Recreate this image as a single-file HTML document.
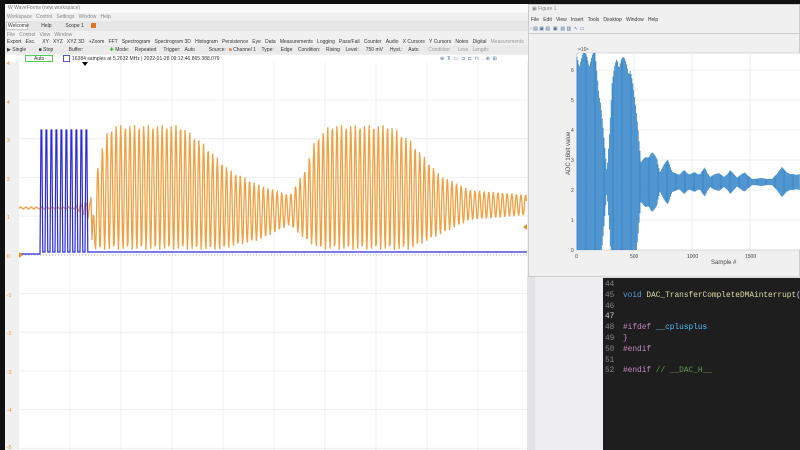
<!DOCTYPE html>
<html><head><meta charset="utf-8"><style>
*{margin:0;padding:0;box-sizing:border-box}
html,body{width:800px;height:450px;overflow:hidden}
body{background:#111;font-family:"Liberation Sans",sans-serif;position:relative}
.a{position:absolute}
.t{font-size:5px;color:#333;white-space:nowrap}
.code{font-family:"Liberation Mono",monospace;font-size:7.8px;white-space:pre;position:absolute}
</style></head><body>
<div class="a" style="left:5px;top:4px;width:523px;height:446px;background:#f0f0f0"></div>
<div class="a" style="left:5px;top:4px;width:523px;height:9px;background:#fafafa"></div>
<div class="a t" style="left:8px;top:5px;color:#777">W WaveForms (new workspace)</div>
<div class="a t" style="left:7px;top:14px;color:#888">Workspace &nbsp; Control &nbsp; Settings &nbsp; Window &nbsp; Help</div>
<div class="a" style="left:5px;top:21px;width:523px;height:10px;background:#e6e6e6"></div>
<div class="a" style="left:6px;top:22px;width:22px;height:8px;background:#fff;border:1px solid #ccc"></div>
<div class="a t" style="left:8px;top:23px">Welcome &nbsp;&nbsp;&nbsp;&nbsp;&nbsp;&nbsp;&nbsp;&nbsp;Help &nbsp;&nbsp;&nbsp;&nbsp;&nbsp;&nbsp;&nbsp;&nbsp;&nbsp;Scope 1</div>
<div class="a" style="left:91px;top:23px;width:5px;height:5px;background:#e8702a"></div>
<div class="a t" style="left:7px;top:32px;color:#888">File &nbsp; Control &nbsp; View &nbsp; Window</div>
<div class="a t" style="left:7px;top:39px">Export &nbsp; Exc. &nbsp;&nbsp;&nbsp;&nbsp;XY &nbsp;&nbsp;XYZ &nbsp;&nbsp;XYZ 3D &nbsp;&nbsp;+Zoom &nbsp;&nbsp;FFT &nbsp;&nbsp;Spectrogram &nbsp;&nbsp;Spectrogram 3D &nbsp;&nbsp;Histogram &nbsp;&nbsp;Persistence &nbsp;&nbsp;Eye &nbsp;&nbsp;Data &nbsp;&nbsp;Measurements &nbsp;&nbsp;Logging &nbsp;&nbsp;Pass/Fail &nbsp;&nbsp;Counter &nbsp;&nbsp;Audio &nbsp;&nbsp;X Cursors &nbsp;&nbsp;Y Cursors &nbsp;&nbsp;Notes &nbsp;&nbsp;Digital &nbsp;&nbsp;<span style="color:#999">Measurements</span></div>
<div class="a" style="left:5px;top:45px;width:523px;height:9px;background:#eaeaea"></div>
<div class="a t" style="left:7px;top:47px">▶ Single &nbsp;&nbsp;&nbsp;&nbsp;&nbsp;&nbsp;&nbsp;&nbsp;■ Stop &nbsp;&nbsp;&nbsp;&nbsp;&nbsp;&nbsp;&nbsp;&nbsp;&nbsp;&nbsp;Buffer: &nbsp;&nbsp;&nbsp;&nbsp;&nbsp;&nbsp;&nbsp;&nbsp;&nbsp;&nbsp;&nbsp;&nbsp;&nbsp;&nbsp;&nbsp;&nbsp;&nbsp;&nbsp;<span style="color:#2a2">✚</span> Mode: &nbsp;&nbsp;&nbsp;Repeated &nbsp;&nbsp;&nbsp;&nbsp;Trigger: &nbsp;&nbsp;Auto &nbsp;&nbsp;&nbsp;&nbsp;&nbsp;&nbsp;&nbsp;&nbsp;&nbsp;Source: &nbsp;<span style="color:#e8702a">■</span> Channel 1 &nbsp;&nbsp;&nbsp;Type: &nbsp;&nbsp;&nbsp;&nbsp;Edge &nbsp;&nbsp;&nbsp;Condition: &nbsp;&nbsp;&nbsp;Rising &nbsp;&nbsp;&nbsp;Level: &nbsp;&nbsp;&nbsp;&nbsp;750 mV &nbsp;&nbsp;&nbsp;&nbsp;Hyst.: &nbsp;&nbsp;&nbsp;Auto &nbsp;&nbsp;&nbsp;&nbsp;&nbsp;&nbsp;<span style="color:#999">Condition: &nbsp;&nbsp;&nbsp;&nbsp;Less &nbsp;&nbsp;Length:</span></div>
<div class="a" style="left:5px;top:55px;width:523px;height:7px;background:#fff"></div>
<div class="a" style="left:25px;top:55px;width:28px;height:7px;border:1px solid #5c5;background:#fff"></div>
<div class="a t" style="left:34px;top:56px">Auto</div>
<div class="a" style="left:63px;top:55px;width:7px;height:7px;border:1px solid #55c"></div>
<div class="a t" style="left:72px;top:56px">16384 samples at 5.2632 MHz | 2022-01-28 09:12:46.865.388.079</div>
<div class="a t" style="left:440px;top:56px;color:#46a">⊕ &nbsp;⊼ &nbsp;▭ &nbsp;⊐ &nbsp;⊏ &nbsp;⊓ &nbsp;. &nbsp;⊕ &nbsp;⊞</div>
<svg class="a" style="left:0;top:0" width="800" height="450">
<rect x="19" y="62" width="508" height="388" fill="#fff"/>
<g id="grid" stroke="#ececec" stroke-width="0.8"></g>
<polyline id="or" fill="none" stroke="#f0a040" stroke-width="1.3"/>
<polyline id="bl" fill="none" stroke="#2b2bdc" stroke-width="1.2"/>
<line x1="19" y1="255" x2="527" y2="255" stroke="#bbb" stroke-dasharray="1,2"/>
<polygon points="19,252 23,255 19,258" fill="#e8902a"/>
<polygon points="527,224 523,227 527,230" fill="#e8902a"/>
<polygon points="82,62 88,62 85,66" fill="#000"/>
<g font-size="5" fill="#e8902a" font-family="Liberation Sans">
<text x="7" y="65">4</text><text x="7" y="104">4</text><text x="7" y="142">3</text><text x="7" y="181">2</text><text x="7" y="219">1</text><text x="7" y="258">0</text><text x="7" y="297">-1</text><text x="7" y="335">-2</text><text x="7" y="374">-3</text><text x="7" y="412">-4</text><text x="7" y="449">-5</text></g>
</svg>
<div class="a" style="left:528px;top:4px;width:272px;height:273px;background:#f0f0f0;border:1px solid #ccc"></div>
<div class="a t" style="left:532px;top:6px;color:#888">▣ Figure 1</div>
<div class="a t" style="left:531px;top:17px">File &nbsp;&nbsp;Edit &nbsp;&nbsp;View &nbsp;&nbsp;Insert &nbsp;&nbsp;Tools &nbsp;&nbsp;Desktop &nbsp;&nbsp;Window &nbsp;&nbsp;Help</div>
<div class="a t" style="left:530px;top:26px;color:#4a6fa0">▫ ▤ ▣ ▤ &nbsp;▣ &nbsp;▤ ▥ &nbsp;↖ ▭</div>
<div class="a" style="left:528px;top:33px;width:272px;height:1px;background:#ccc"></div>
<svg class="a" style="left:0;top:0" width="800" height="450">
<rect x="577" y="53" width="230" height="197" fill="#fff" stroke="#bbb" stroke-width="0.5"/>
<g stroke="#eee"><line x1="634" y1="53" x2="634" y2="250"/><line x1="692" y1="53" x2="692" y2="250"/><line x1="750" y1="53" x2="750" y2="250"/>
<line x1="577" y1="220" x2="800" y2="220"/><line x1="577" y1="190" x2="800" y2="190"/><line x1="577" y1="160" x2="800" y2="160"/><line x1="577" y1="130" x2="800" y2="130"/><line x1="577" y1="100" x2="800" y2="100"/><line x1="577" y1="70" x2="800" y2="70"/></g>
<g id="fg" stroke="#3585c8" stroke-width="0.85"></g>
<g font-size="5" fill="#444" font-family="Liberation Sans">
<text x="575" y="258">0</text><text x="630" y="258">500</text><text x="687" y="258">1000</text><text x="745" y="258">1500</text>
<text x="571" y="252">0</text><text x="571" y="222">1</text><text x="571" y="192">2</text><text x="571" y="162">3</text><text x="571" y="132">4</text><text x="571" y="102">5</text><text x="571" y="72">6</text>
<text x="578" y="51">×10⁴</text>
<text x="711" y="264" font-size="6">Sample #</text>
<text transform="translate(570,175) rotate(-90)" font-size="6">ADC 16bit value</text></g>
</svg>
<div class="a" style="left:528px;top:277px;width:75px;height:173px;background:#eeeef0"></div>
<div class="a" style="left:527px;top:277px;width:8px;height:173px;background:#e4e4e6"></div>
<div class="a" style="left:603px;top:277px;width:197px;height:173px;background:#1e1e1e"></div>
<div class="a" style="left:603px;top:276px;width:197px;height:2px;background:#ddd"></div>
<div class="code" style="left:605px;top:280px;color:#858585;line-height:10.8px">44
45
46
<span style="color:#ccc">47</span>
48
49
50
51
52</div>
<div class="code" style="left:623px;top:280px;line-height:10.8px;color:#d4d4d4"> 
<span style="color:#569cd6">void</span> <span style="color:#dcdcaa">DAC_TransferCompleteDMAinterrupt</span>(DAC
 
 
<span style="color:#c586c0">#ifdef</span> <span style="color:#4fc1ff">__cplusplus</span>
<span style="color:#c586c0">}</span>
<span style="color:#c586c0">#endif</span>
 
<span style="color:#c586c0">#endif</span> <span style="color:#6a9955">// __DAC_H__</span></div>
<script>
(function(){
function interp(pts,x){for(let i=0;i<pts.length-1;i++){if(x>=pts[i][0]&&x<=pts[i+1][0]){const t=(x-pts[i][0])/(pts[i+1][0]-pts[i][0]);return pts[i][1]+t*(pts[i+1][1]-pts[i][1]);}}return pts[pts.length-1][1];}
let g='';
for(let x=70;x<527;x+=51)g+=`<line x1="${x}" y1="62" x2="${x}" y2="450"/>`;
for(let y=100;y<450;y+=38.7)g+=`<line x1="19" y1="${y}" x2="527" y2="${y}"/>`;
document.getElementById('grid').innerHTML=g;
let b=[[19,254],[40,254]];
for(let i=0;i<10;i++){const x=40+i*5;b.push([x+1,130],[x+1.8,130],[x+2.8,252],[x+5,252]);}
b.push([90,252],[92,252],[527,252]);
document.getElementById('bl').setAttribute('points',b.map(p=>p.join(',')).join(' '));
const tp=[[92,230],[97,170],[105,135],[115,125],[180,125],[200,140],[230,170],[260,185],[290,195],[305,170],[315,140],[330,125],[390,125],[410,140],[440,175],[470,190],[527,195]];
const bt=[[92,250],[220,250],[260,240],[290,225],[305,240],[320,250],[410,250],[440,235],[470,220],[527,215]];
let o=[];
for(let x=19;x<=92;x+=1.5)o.push([x,208+Math.sin(x*3)*1.2+(x>70?Math.sin(x*1.3)*(x-70)*0.6:0)]);
for(let x=92;x<=527;x+=0.6){const t=interp(tp,x),bb=interp(bt,x);const s=Math.sin((x-92)/4.6*2*Math.PI);o.push([x,(t+bb)/2-s*(bb-t)/2]);}
document.getElementById('or').setAttribute('points',o.map(p=>p[0].toFixed(1)+','+p[1].toFixed(1)).join(' '));
const env=[[577,130],[595,130],[600,90],[607,10],[612,100],[617,130],[630,120],[638,60],[641,20],[645,25],[652,30],[657,25],[660,10],[668,25],[672,10],[680,8],[684,12],[690,8],[695,10],[700,8],[705,15],[710,5],[718,10],[724,5],[730,12],[737,5],[745,10],[752,3],[760,4],[772,3],[782,15],[790,8],[800,8]];
let f='';
for(let x=577;x<=800;x+=0.9){const a=interp(env,x)*(0.88+0.12*Math.abs(Math.sin(x*7.3)));f+=`<line x1="${x.toFixed(1)}" y1="${Math.max(53,182-a).toFixed(1)}" x2="${x.toFixed(1)}" y2="${Math.min(250,182+a).toFixed(1)}"/>`;}
document.getElementById('fg').innerHTML=f;
})();
</script>
</body></html>
